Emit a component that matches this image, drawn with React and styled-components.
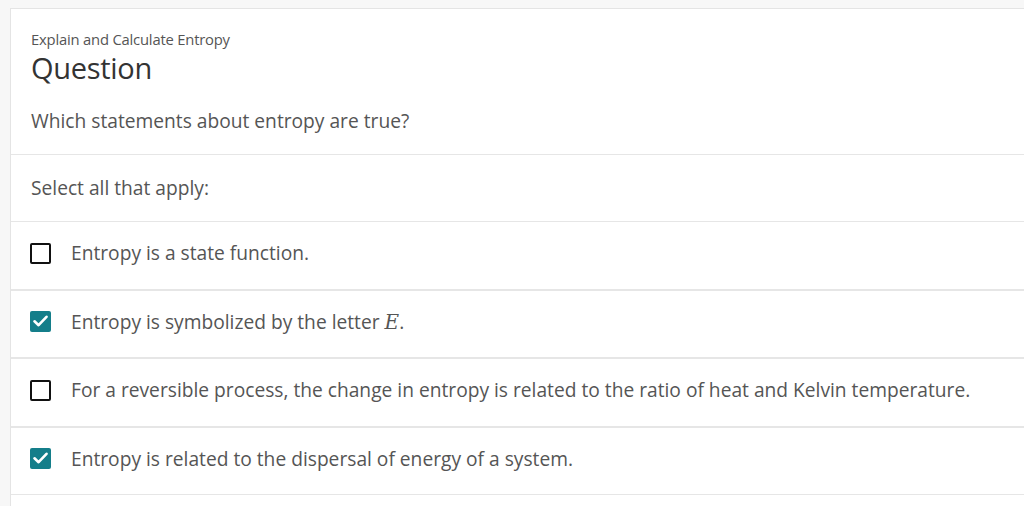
import React from "react";
import styled, { createGlobalStyle } from "styled-components";

const Global = createGlobalStyle`
  html, body { margin: 0; padding: 0; background: #f7f7f7; }
  body { font-family: "Open Sans", "Noto Sans", sans-serif; overflow: hidden; }
`;

const Page = styled.div`
  padding: 8px 0 0 10px;
  width: 1024px;
  box-sizing: border-box;
`;

const Card = styled.div`
  background: #fff;
  border: 1px solid #e4e4e4;
  border-right: none;
  width: 1040px;
  min-height: 520px;
  box-sizing: border-box;
`;

const Header = styled.div`
  padding: 20px 20px 20px;
  border-bottom: 1px solid #e6e6e6;
`;

const Subtitle = styled.div`
  font-size: 14.8px;
  line-height: 20px;
  color: #555;
  letter-spacing: -0.2px;
`;

const Title = styled.h1`
  margin: 0;
  font-size: 29px;
  font-weight: 400;
  line-height: 38px;
  color: #333;
  letter-spacing: -0.3px;
`;

const Prompt = styled.p`
  margin: 21px 0 0;
  font-size: 19.2px;
  line-height: 26px;
  color: #555;
`;

const Instruction = styled.div`
  padding: 20px 20px 20px;
  font-size: 19.2px;
  line-height: 26px;
  color: #555;
  border-bottom: 1px solid #e6e6e6;
`;

const Option = styled.label`
  display: flex;
  align-items: center;
  gap: 20px;
  height: 62.5px;
  padding: 0 20px 4px 19px;
  border-bottom: ${(p) => (p.$last ? "1px" : "2px")} solid #e6e6e6;
  font-size: 19.2px;
  color: #555;
  cursor: pointer;
`;

const Box = styled.span`
  flex: none;
  width: 21px;
  height: 21px;
  box-sizing: border-box;
  border-radius: 2px;
  display: flex;
  align-items: center;
  justify-content: center;
  border: ${(p) => (p.$checked ? "none" : "2.5px solid #111")};
  background: ${(p) => (p.$checked ? "#147e8a" : "#fff")};
  margin-top: ${(p) => (p.$checked ? "-1px" : "0")};
`;

const Text = styled.span`
  line-height: 26px;
`;

const MathVar = styled.span`
  font-family: "DejaVu Serif", "Liberation Serif", serif;
  font-style: italic;
  font-size: 20px;
`;

const Check = () => (
  <svg width="15" height="12" viewBox="0 0 15 12">
    <path d="M1.5 6.3 L5.6 10.2 L13.5 1.8" fill="none" stroke="#fff" strokeWidth="2.6" strokeLinecap="round" strokeLinejoin="round" />
  </svg>
);

const options = [
  { text: "Entropy is a state function.", checked: false },
  { text: <>Entropy is symbolized by the letter <MathVar>E</MathVar>.</>, checked: true },
  { text: "For a reversible process, the change in entropy is related to the ratio of heat and Kelvin temperature.", checked: false },
  { text: "Entropy is related to the dispersal of energy of a system.", checked: true },
];

export default function App() {
  return (
    <>
      <Global />
      <Page>
        <Card>
          <Header>
            <Subtitle>Explain and Calculate Entropy</Subtitle>
            <Title>Question</Title>
            <Prompt>Which statements about entropy are true?</Prompt>
          </Header>
          <Instruction>Select all that apply:</Instruction>
          {options.map((o, i) => (
            <Option key={i} $last={i === options.length - 1}>
              <Box $checked={o.checked}>{o.checked && <Check />}</Box>
              <Text>{o.text}</Text>
            </Option>
          ))}
        </Card>
      </Page>
    </>
  );
}
